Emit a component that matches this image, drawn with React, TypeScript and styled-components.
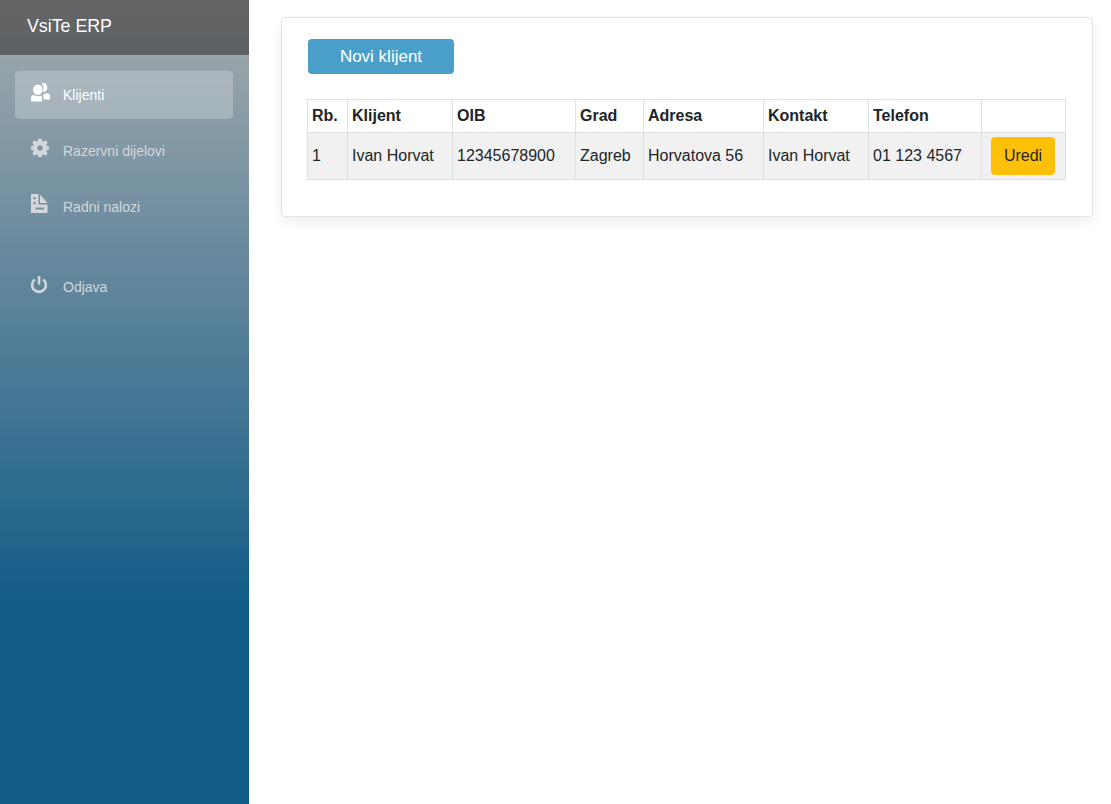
import { ReactNode } from 'react';
import styled, { createGlobalStyle } from 'styled-components';

const GlobalStyle = createGlobalStyle`
  html, body {
    margin: 0;
    padding: 0;
    height: 100%;
  }

  body {
    background: #ffffff;
    color: #212529;
    font-family: 'Liberation Sans', Arial, sans-serif;
  }

  * {
    box-sizing: border-box;
  }
`;

const UsersIcon = () => (
  <svg width="20" height="20" viewBox="0 0 20 20" fill="currentColor">
    <ellipse cx="7.800" cy="7.800" rx="4.700" ry="5.200" />
    <path d="M13.500 1c2.300 0 3.800 1.700 3.800 4.200 0 2.400-1.400 4.600-3.500 4.600-.4 0-.8-.1-1.100-.2.500-1 .8-2.100.8-3 0-1.900-.7-3.500-1.900-4.500.5-.7 1.100-1.100 1.900-1.100z" />
    <path d="M1 19.500v-3.700c0-1.700 1.100-2.500 2.500-2.700.8.700 2.400 1.200 4.300 1.200s3.400-.4 4.200-1.100v6.300z" />
    <path d="M13.500 17.500v-5.300l1.500-.8c.6.200 1.400.200 2.200-.1 1.600.200 2.800 1 2.800 2.500v3.700z" />
  </svg>
);

const GearIcon = () => (
  <svg width="20" height="20" viewBox="0 0 20 20" fill="currentColor">
    <path
      fillRule="evenodd"
      d="M8.200 1h3.200l.5 2.400 1.400.6 2-1.400 2.200 2.300-1.400 2 .6 1.400 2.200.5v3.100l-2.200.5-.6 1.400 1.400 2-2.200 2.300-2-1.400-1.400.6-.5 2.200H8.200l-.5-2.200-1.400-.6-2 1.400-2.200-2.300 1.400-2-.6-1.400-2.200-.5V8.800l2.200-.5.6-1.400-1.400-2 2.200-2.300 2 1.400 1.400-.6zM9.800 7.600a2.800 2.800 0 1 0 0 5.600 2.800 2.800 0 0 0 0-5.600z"
      transform="translate(.2 -.4)"
    />
  </svg>
);

const DocumentIcon = () => (
  <svg width="20" height="20" viewBox="0 0 20 20" fill="currentColor">
    <path
      fillRule="evenodd"
      d="M1 0h7.500v10.500h9V19H1zM3.500 3v2.200h2.200V3zM3.500 8v2.200h2.200V8zM5.500 13.500v2h8.500v-2z"
    />
    <path d="M10 .5 17.500 9H10z" />
  </svg>
);

const PowerIcon = () => (
  <svg width="20" height="20" viewBox="0 0 20 20" fill="none" stroke="currentColor" strokeWidth="2.600">
    <path d="M9 2v8.500" />
    <path d="M4.800 5.500a6.900 6.900 0 1 0 8.400 0" />
  </svg>
);

const Layout = styled.div`
  display: flex;
  min-height: 804px;
`;

const Sidebar = styled.aside`
  width: 249px;
  flex-shrink: 0;
  background: linear-gradient(180deg, #a6abae 0%, #125c88 75%, #125c88 100%);
`;

const Brand = styled.div`
  height: 55px;
  padding: 16px 27px 0;
  background: linear-gradient(180deg, #656566 0%, #5d6164 100%);
  color: #ffffff;
  font-size: 17.800px;
  line-height: 21px;
`;

const Nav = styled.nav`
  display: flex;
  flex-direction: column;
  padding: 16px 16px 0 15px;
`;

const NavItem = styled.a<{ $active?: boolean; $gap?: number }>`
  display: flex;
  align-items: flex-start;
  gap: 13px;
  height: 48px;
  margin-bottom: ${({ $gap }) => $gap ?? 8}px;
  padding: 11px 15px 0;
  border-radius: 4px;
  background: ${({ $active }) => ($active ? 'rgba(255, 255, 255, 0.23)' : 'transparent')};
  color: ${({ $active }) => ($active ? '#ffffff' : '#d4d7d9')};
  font-size: 14px;
`;

const NavLabel = styled.span`
  margin-top: 5px;
  line-height: 16px;
`;

const Main = styled.main`
  flex: 1;
  padding: 17px 20px 0 32px;
`;

const Card = styled.section`
  height: 200px;
  padding: 21px 26px 0;
  background: #ffffff;
  border: 1px solid #e3e3e3;
  border-radius: 4px;
  box-shadow: 0 6px 12px rgba(0, 0, 0, 0.06);
`;

const PrimaryButton = styled.button`
  display: block;
  width: 146px;
  height: 35px;
  margin: 0 0 25px 0;
  padding: 0;
  border: 0;
  border-radius: 4px;
  background: #4a9fca;
  color: #ffffff;
  font-family: inherit;
  font-size: 17px;
`;

const Table = styled.table`
  width: 758px;
  margin-left: -1px;
  border-collapse: collapse;
  table-layout: fixed;
  font-size: 16px;
`;

const HeadCell = styled.th<{ $width: number }>`
  width: ${({ $width }) => $width}px;
  height: 33px;
  padding: 0 4px;
  border: 1px solid #dee2e6;
  text-align: left;
  font-weight: 700;
`;

const DataRow = styled.tr`
  background: #f1f1f2;
`;

const DataCell = styled.td`
  height: 47px;
  padding: 0 4px;
  border: 1px solid #dee2e6;
  white-space: nowrap;
`;

const ActionCell = styled(DataCell)`
  padding-left: 9px;
`;

const EditButton = styled.button`
  display: block;
  width: 64px;
  height: 38px;
  padding: 0;
  border: 0;
  border-radius: 4px;
  background: #ffc107;
  color: #212529;
  font-family: inherit;
  font-size: 16px;
`;

const columns = [
  { title: 'Rb.', width: 40 },
  { title: 'Klijent', width: 105 },
  { title: 'OIB', width: 123 },
  { title: 'Grad', width: 68 },
  { title: 'Adresa', width: 120 },
  { title: 'Kontakt', width: 105 },
  { title: 'Telefon', width: 113 },
  { title: '', width: 84 },
];

const clients = [
  {
    id: 1,
    name: 'Ivan Horvat',
    oib: '12345678900',
    city: 'Zagreb',
    address: 'Horvatova 56',
    contact: 'Ivan Horvat',
    phone: '01 123 4567',
  },
];

const menu: { label: string; icon: ReactNode; active?: boolean; gap?: number }[] = [
  { label: 'Klijenti', icon: <UsersIcon />, active: true },
  { label: 'Razervni dijelovi', icon: <GearIcon /> },
  { label: 'Radni nalozi', icon: <DocumentIcon />, gap: 32 },
  { label: 'Odjava', icon: <PowerIcon /> },
];

export default function App() {
  return (
    <Layout>
      <GlobalStyle />
      <Sidebar>
        <Brand>VsiTe ERP</Brand>
        <Nav>
          {menu.map((item) => (
            <NavItem key={item.label} $active={item.active} $gap={item.gap}>
              {item.icon}
              <NavLabel>{item.label}</NavLabel>
            </NavItem>
          ))}
        </Nav>
      </Sidebar>
      <Main>
        <Card>
          <PrimaryButton type="button">Novi klijent</PrimaryButton>
          <Table>
            <thead>
              <tr>
                {columns.map((column) => (
                  <HeadCell key={column.width + column.title} $width={column.width}>
                    {column.title}
                  </HeadCell>
                ))}
              </tr>
            </thead>
            <tbody>
              {clients.map((client) => (
                <DataRow key={client.id}>
                  <DataCell>{client.id}</DataCell>
                  <DataCell>{client.name}</DataCell>
                  <DataCell>{client.oib}</DataCell>
                  <DataCell>{client.city}</DataCell>
                  <DataCell>{client.address}</DataCell>
                  <DataCell>{client.contact}</DataCell>
                  <DataCell>{client.phone}</DataCell>
                  <ActionCell>
                    <EditButton type="button">Uredi</EditButton>
                  </ActionCell>
                </DataRow>
              ))}
            </tbody>
          </Table>
        </Card>
      </Main>
    </Layout>
  );
}
